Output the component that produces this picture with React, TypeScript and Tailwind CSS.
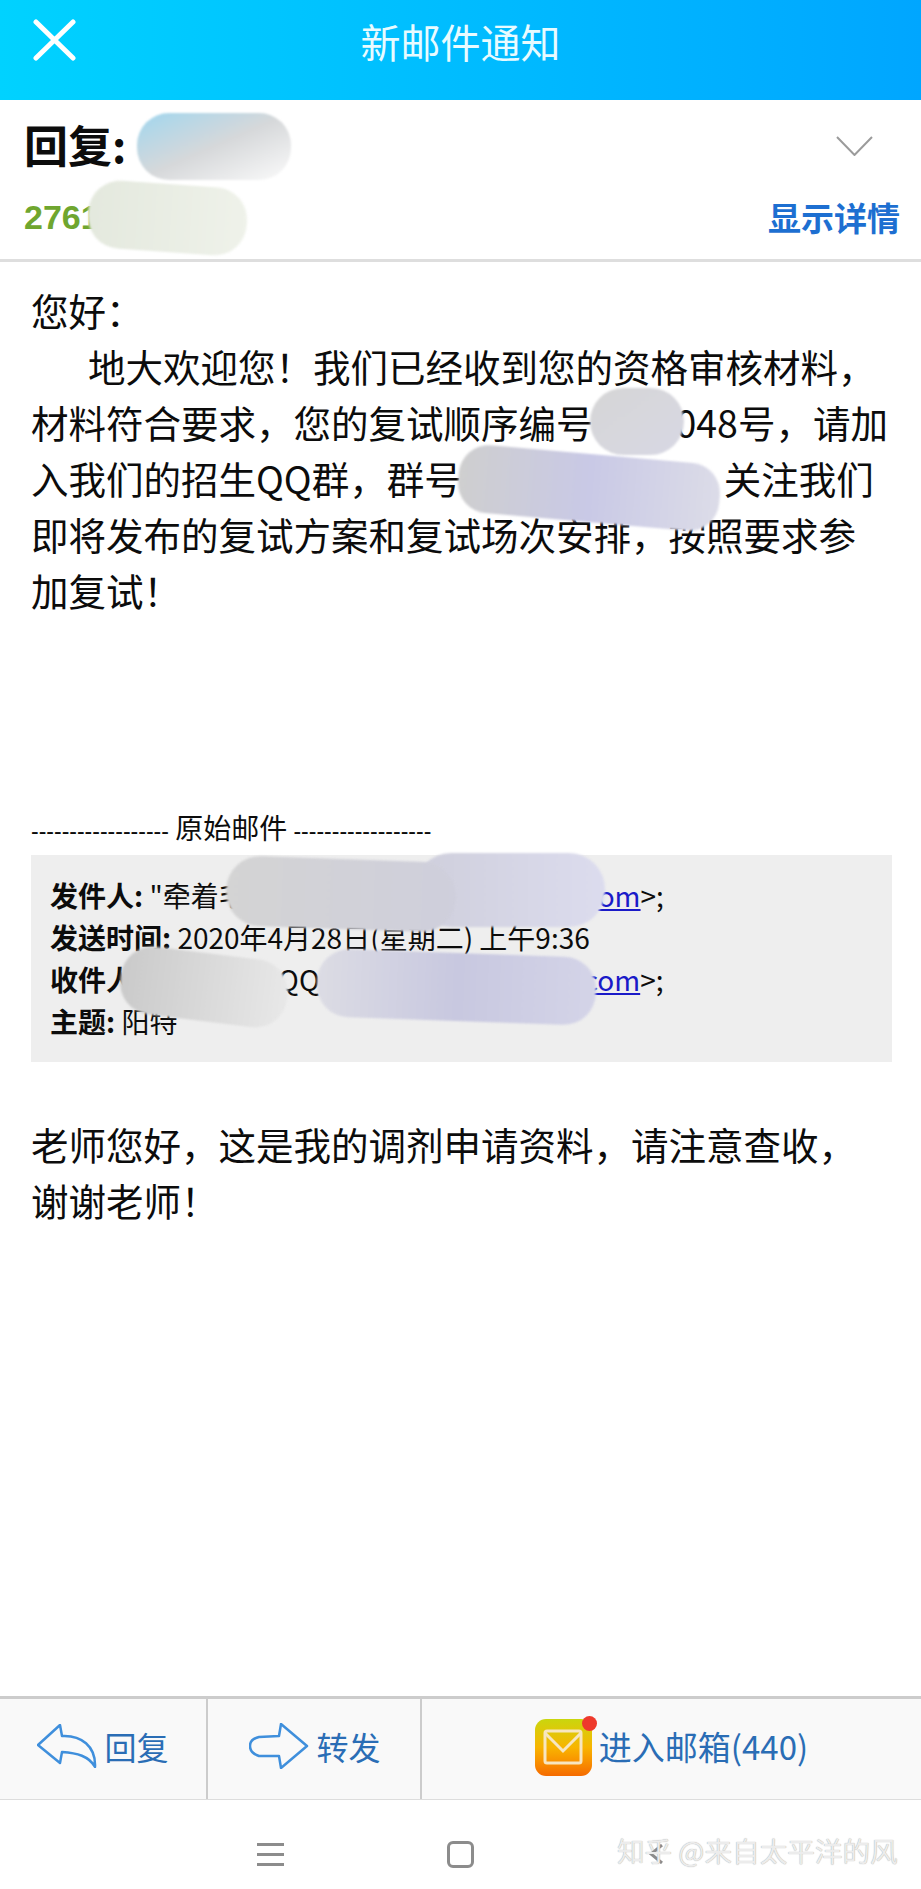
const cjk = "font-['Noto_Sans_CJK_SC','Noto_Sans',sans-serif]";

const Blob = ({ className }: { className: string }) => (
  <div className={`absolute blur-[1px] ${className}`}></div>
);

const ReplyIcon = () => (
  <svg width="60" height="44" viewBox="0 0 60 44" fill="none" stroke="#3f8fdc" strokeWidth="2.5" strokeLinejoin="round">
    <path d="M1 21 L23 1 L25 12 C44 11 59 22 58 43 C52 32 40 29 25 28 L23 39 Z" />
  </svg>
);

const ForwardIcon = () => (
  <svg width="60" height="46" viewBox="0 0 60 46" fill="none" stroke="#3f8fdc" strokeWidth="2.5" strokeLinejoin="round">
    <path d="M32 1 L58 23 L32 45 L30 33 L10 33 Q1 30 1 23 Q1 16 10 14 L30 13 Z" />
  </svg>
);

const MailIcon = () => (
  <div className="relative w-[57px] h-[57px] rounded-[11px] bg-gradient-to-b from-[#c9d60e] via-[#f8b400] to-[#f56a00] flex items-center justify-center">
    <svg width="40" height="36" viewBox="0 0 40 36" fill="none" stroke="#f7e6c0" strokeWidth="3">
      <rect x="2" y="2" width="36" height="32" rx="2" />
      <path d="M2 4 L20 22 L38 4" />
    </svg>
    <span className="absolute -top-[3px] -right-[5px] w-[15px] h-[15px] rounded-full bg-[#ee3a2c]"></span>
  </div>
);

export default function App() {
  return (
    <div className={`${cjk} relative w-[921px] h-[1889px] bg-white flex flex-col overflow-hidden text-[#0c0c0c]`}>
      <header className="h-[100px] bg-gradient-to-r from-[#00d2ff] to-[#00a6ff] relative flex justify-center pt-[17px] shrink-0">
        <svg className="absolute left-[33px] top-[19px]" width="43" height="42" viewBox="0 0 43 42" fill="none" stroke="white" strokeWidth="5" strokeLinecap="round">
          <path d="M3 3 L40 39 M40 3 L3 39" />
        </svg>
        <span className="text-[40px] leading-[48px] text-[#e8fbff]">新邮件通知</span>
      </header>

      <section className="h-[162px] shrink-0 border-b-[3px] border-[#dedede] pl-[24px] pr-[21px] flex flex-col">
        <div className="h-[88px] flex items-center justify-between">
          <span className="text-[44px] font-bold">回复:</span>
          <svg className="mr-[27px] mt-[4px]" width="37" height="20" viewBox="0 0 37 20" fill="none" stroke="#9b9b9b" strokeWidth="2">
            <path d="M1 1 L18.5 19 L36 1" />
          </svg>
        </div>
        <div className="flex items-center justify-between mt-[4px]">
          <span className="text-[34px] font-bold text-[#6fa62f] font-['Liberation_Sans',sans-serif]">2761</span>
          <span className="text-[33px] font-bold text-[#1d6fd1]">显示详情</span>
        </div>
      </section>

      <main className="flex-1 pl-[31px] pr-[29px] pt-[20px]">
        <div className="text-[37.5px] leading-[56px] whitespace-nowrap">
          <div>您好：</div>
          <div className="pl-[57px]">地大欢迎您！我们已经收到您的资格审核材料，</div>
          <div>材料符合要求，您的复试顺序编号<span className="inline-block w-[82px]"></span>048号，请加</div>
          <div>入我们的招生QQ群，群号<span className="inline-block w-[262px]"></span>关注我们</div>
          <div>即将发布的复试方案和复试场次安排，按照要求参</div>
          <div>加复试！</div>
        </div>

        <div className="mt-[189px] text-[28px] leading-[40px] whitespace-nowrap">
          <span className="font-['Liberation_Sans',sans-serif] text-[23px]">------------------</span>
          <span> 原始邮件 </span>
          <span className="font-['Liberation_Sans',sans-serif] text-[23px]">------------------</span>
        </div>

        <div className="mt-[4px] h-[207px] bg-[#eeeeee] pl-[19px] pt-[19px] text-[28px] leading-[42px] whitespace-nowrap">
          <div><b>发件人:</b> "牵着毛<span className="inline-block w-[351px]"></span><span className="underline text-[#1a1ac8]">om</span>&gt;;</div>
          <div><b>发送时间:</b> 2020年4月28日(星期二) 上午9:36</div>
          <div><b>收件人:</b><span className="inline-block w-[135px]"></span>QQ<span className="inline-block w-[264px]"></span><span className="underline text-[#1a1ac8]">com</span>&gt;;</div>
          <div><b>主题:</b> 阳特</div>
        </div>

        <div className="mt-[54px] text-[37.5px] leading-[56px] whitespace-nowrap">
          <div>老师您好，这是我的调剂申请资料，请注意查收，</div>
          <div>谢谢老师！</div>
        </div>
      </main>

      <footer className="h-[104px] shrink-0 -mt-[1px] border-t-[3px] border-b border-t-[#cccccc] border-b-[#dddddd] bg-[#f9f9f9] flex text-[32px] text-[#2a6db5]">
        <div className="w-[208px] border-r-2 border-[#cccccc] flex items-center justify-center gap-[7px] pb-[6px]">
          <ReplyIcon />
          <span>回复</span>
        </div>
        <div className="w-[214px] border-r-2 border-[#cccccc] flex items-center justify-center gap-[7px] pb-[6px] pl-[2px]">
          <ForwardIcon />
          <span>转发</span>
        </div>
        <div className="flex-1 flex items-center justify-center gap-[7px] pb-[4px] text-[33px]">
          <MailIcon />
          <span>进入邮箱(440)</span>
        </div>
      </footer>

      <nav className="h-[89px] shrink-0 relative flex items-center pl-[257px] pt-[19px]">
        <div className="w-[27px] flex flex-col gap-[7px]">
          <span className="h-[3px] bg-[#8c8c8c]"></span>
          <span className="h-[3px] bg-[#8c8c8c]"></span>
          <span className="h-[3px] bg-[#8c8c8c]"></span>
        </div>
        <div className="ml-[163px] w-[27px] h-[27px] rounded-[6px] border-[3px] border-[#8c8c8c]"></div>
        <svg className="ml-[175px]" width="15" height="20" viewBox="0 0 15 20" fill="none" stroke="#8c8c8c" strokeWidth="3">
          <path d="M13 1 L2 10 L13 19" />
        </svg>
        <span className="absolute left-[617px] top-[32px] text-[27.6px] leading-[36px] whitespace-nowrap text-[#ececec] [text-shadow:0_0_1px_#999]">知乎 @来自太平洋的风</span>
      </nav>

      {/* 打码涂抹 */}
      <Blob className="left-[137px] top-[113px] w-[154px] h-[67px] rounded-[32px] bg-gradient-to-br from-[#9fd6ee] via-[#d6d8da] to-[#fbfbfb]" />
      <Blob className="left-[88px] top-[184px] w-[159px] h-[68px] rounded-[32px] rotate-[4deg] bg-gradient-to-r from-[#e4e9de] to-[#eff2ea]" />
      <Blob className="left-[590px] top-[388px] w-[94px] h-[67px] rounded-[34px] bg-gradient-to-br from-[#d6d6d6] to-[#d8d8e4]" />
      <Blob className="left-[458px] top-[454px] w-[262px] h-[68px] rounded-[30px] rotate-[5deg] bg-gradient-to-r from-[#cfcfcf] via-[#c9c9e6] to-[#dcdce8]" />
      <Blob className="left-[415px] top-[853px] w-[190px] h-[74px] rounded-[36px] bg-gradient-to-r from-[#cfcfdc] to-[#dcdcee]" />
      <Blob className="left-[226px] top-[859px] w-[230px] h-[70px] rounded-[34px] rotate-[2deg] bg-gradient-to-r from-[#d4d4d4] to-[#cfcfdc]" />
      <Blob className="left-[120px] top-[953px] w-[168px] h-[68px] rounded-[32px] rotate-[7deg] bg-gradient-to-r from-[#cacaca] to-[#e8e8e8]" />
      <Blob className="left-[317px] top-[953px] w-[279px] h-[68px] rounded-[32px] rotate-[2deg] bg-gradient-to-r from-[#dcdce4] via-[#c8c8e0] to-[#d4d4e8]" />
    </div>
  );
}
